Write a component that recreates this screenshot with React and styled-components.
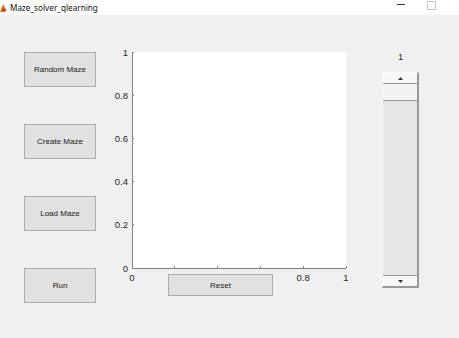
import styled, { createGlobalStyle } from "styled-components";

const Global = createGlobalStyle`
  html, body { margin: 0; padding: 0; background: #f0f0f0; }
  body { font-family: "Liberation Sans", Arial, sans-serif; }
`;

const Window = styled.div`
  width: 459px;
  height: 338px;
  background: #f0f0f0;
  overflow: hidden;
  display: flex;
  flex-direction: column;
`;

const TitleBar = styled.div`
  height: 15px;
  background: #fff;
  display: flex;
  align-items: center;
  flex-shrink: 0;
`;

const Title = styled.span`
  font-family: "Noto Sans", "Liberation Sans", sans-serif;
  font-size: 8.2px;
  color: #111;
  margin-left: 3px;
  line-height: 15px;
`;

const WinControls = styled.div`
  margin-left: auto;
  display: flex;
  align-items: center;
  gap: 22px;
  margin-right: 23px;
  height: 15px;
`;

const Minimize = styled.div`
  width: 8px;
  height: 1px;
  background: #333;
  margin-top: -6px;
`;

const Maximize = styled.div`
  width: 7px;
  height: 7px;
  border: 1px solid #c8c8c8;
  margin-top: -5px;
`;

const Content = styled.div`
  flex: 1;
  display: flex;
  align-items: flex-start;
`;

const ButtonColumn = styled.div`
  display: flex;
  flex-direction: column;
  gap: 37px;
  margin-left: 24px;
  margin-top: 37px;
  width: 72px;
`;

const Button = styled.button`
  width: ${(p) => p.$w || 72}px;
  height: ${(p) => p.$h || 35}px;
  background: #e1e1e1;
  border: 1px solid #adadad;
  padding: 0;
  font-family: "Liberation Sans", Arial, sans-serif;
  font-size: 8px;
  color: #1a1a1a;
  box-sizing: border-box;
`;

const PlotWrap = styled.div`
  position: relative;
  width: 250px;
  height: 245px;
  margin-left: 9px;
  margin-top: 30px;
`;

const ResetButton = styled(Button)`
  position: absolute;
  left: 63px;
  top: 229px;
`;

const SliderColumn = styled.div`
  margin-left: 27px;
  margin-top: 36px;
  width: 37px;
  display: flex;
  flex-direction: column;
  align-items: center;
`;

const SliderValue = styled.div`
  font-size: 8.5px;
  color: #111;
  height: 21px;
  line-height: 13px;
`;

const Slider = styled.div`
  width: 37px;
  height: 216px;
  box-sizing: border-box;
  border-right: 2px solid #9a9a9a;
  border-bottom: 2px solid #9a9a9a;
  border-top: 1px solid #fafafa;
  border-left: 1px solid #fafafa;
  display: flex;
  flex-direction: column;
  background: #e6e6e6;
`;

const Arrow = styled.div`
  height: 10px;
  background: #f7f7f7;
  display: flex;
  align-items: center;
  justify-content: center;
  border-${(p) => (p.$down ? "top" : "bottom")}: 1px solid #9a9a9a;
  flex-shrink: 0;
`;

const Thumb = styled.div`
  height: 16px;
  background: #f3f3f3;
  border-bottom: 1px solid #9a9a9a;
  flex-shrink: 0;
`;

const Trough = styled.div`
  flex: 1;
`;

const MatlabIcon = () => (
  <svg width="7" height="9" viewBox="0 0 7 9">
    <path d="M0 9 L3 1 L7 8 Z" fill="#e07b1f" />
    <path d="M2 9 L3 4 L6 8 Z" fill="#b8421a" />
  </svg>
);

const Tri = ({ down }) => (
  <svg width="5" height="3" viewBox="0 0 5 3">
    <path d={down ? "M0 0 L5 0 L2.5 3 Z" : "M0 3 L5 3 L2.5 0 Z"} fill="#333" />
  </svg>
);

// axes box in svg coords
const AX = 27;
const AY = 7;
const AW = 214;
const AH = 216;
const ticks = [0, 0.2, 0.4, 0.6, 0.8, 1];
// x labels 0.2..0.6 sit behind the Reset button
const xLabels = [0, 0.8, 1];
const fmt = (v) => (v === 0 || v === 1 ? String(v) : v.toFixed(1));

const Axes = () => (
  <svg width="250" height="245" style={{ display: "block" }}>
    <rect x={AX} y={AY} width={AW} height={AH} fill="#fff" />
    <g stroke="#808080" strokeWidth="1" shapeRendering="crispEdges">
      <line x1={AX} y1={AY} x2={AX} y2={AY + AH} />
      <line x1={AX} y1={AY + AH} x2={AX + AW} y2={AY + AH} />
      {ticks.map((t) => (
        <line key={"y" + t} x1={AX} x2={AX + 2} y1={AY + AH - t * AH} y2={AY + AH - t * AH} />
      ))}
      {ticks.map((t) => (
        <line key={"x" + t} y1={AY + AH} y2={AY + AH - 2} x1={AX + t * AW} x2={AX + t * AW} />
      ))}
    </g>
    <g fontFamily="Liberation Sans, Arial, sans-serif" fontSize="9.5" fill="#262626">
      {ticks.map((t) => (
        <text key={"ly" + t} x={AX - 4} y={AY + AH - t * AH + 3.5} textAnchor="end">
          {fmt(t)}
        </text>
      ))}
      {xLabels.map((t) => (
        <text key={"lx" + t} x={AX + t * AW} y={AY + AH + 13} textAnchor="middle">
          {fmt(t)}
        </text>
      ))}
    </g>
  </svg>
);

export default function App() {
  return (
    <Window>
      <Global />
      <TitleBar>
        <MatlabIcon />
        <Title>Maze_solver_qlearning</Title>
        <WinControls>
          <Minimize />
          <Maximize />
        </WinControls>
      </TitleBar>
      <Content>
        <ButtonColumn>
          <Button>Random Maze</Button>
          <Button>Create Maze</Button>
          <Button>Load Maze</Button>
          <Button>Run</Button>
        </ButtonColumn>
        <PlotWrap>
          <Axes />
          <ResetButton $w={105} $h={22}>Reset</ResetButton>
        </PlotWrap>
        <SliderColumn>
          <SliderValue>1</SliderValue>
          <Slider>
            <Arrow>
              <Tri />
            </Arrow>
            <Thumb />
            <Trough />
            <Arrow $down>
              <Tri down />
            </Arrow>
          </Slider>
        </SliderColumn>
      </Content>
    </Window>
  );
}
